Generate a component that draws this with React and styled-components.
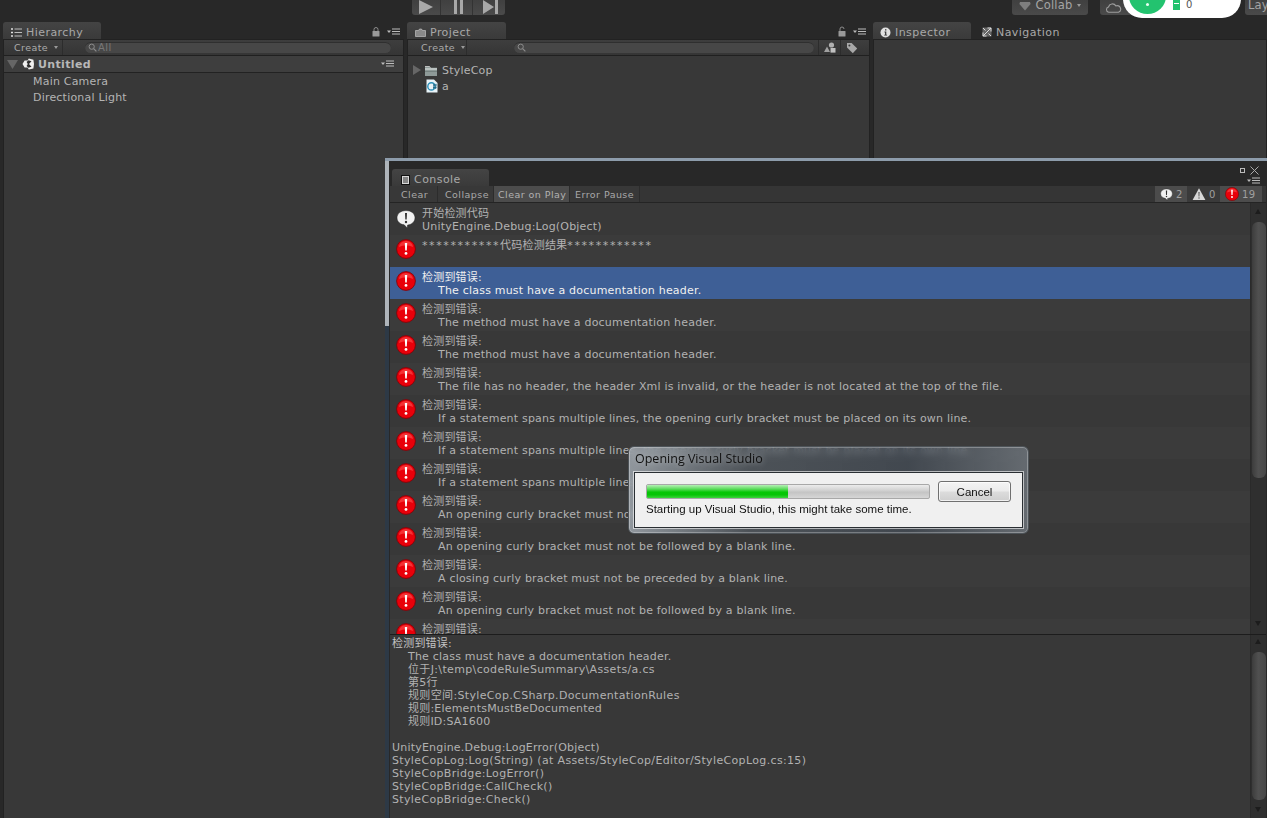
import React from "react";
import styled, { createGlobalStyle } from "styled-components";

const Global = createGlobalStyle`
  html, body { margin: 0; padding: 0; background: #282828; }
  #root { width: 1267px; height: 818px; }
  * { box-sizing: border-box; }
`;

const uiFont = `"DejaVu Sans", "Noto Sans CJK SC", sans-serif`;

const Screen = styled.div`
  position: relative;
  width: 1267px;
  height: 818px;
  overflow: hidden;
  background: #282828;
  font: 11px/13px ${uiFont};
  letter-spacing: 0.2px;
  color: #b4b4b4;
`;

/* ---- top toolbar ---- */
const TopBar = styled.div`
  height: 22px;
  position: relative;
`;
const ToolGroup = styled.div`
  position: absolute;
  top: -6px;
  left: ${p => p.$left}px;
  width: ${p => p.$width}px;
  height: 21px;
  display: flex;
  align-items: center;
  justify-content: ${p => p.$justify || "center"};
  gap: 4px;
  padding: ${p => p.$top ?? 2}px 0 0 ${p => p.$pad || 0}px;
  background: linear-gradient(#3c3c3c, #4a4a4a);
  border-radius: 3px;
  color: #a4a4a4;
  font-size: 11.5px;
  white-space: nowrap;
  overflow: hidden;
`;
const PlaySegment = styled.div`
  flex: 1;
  height: 21px;
  display: flex;
  align-items: center;
  justify-content: center;
  border-right: ${p => (p.$last ? "none" : "1px solid #333")};
`;
const Bubble = styled.div`
  position: absolute;
  left: 1123px;
  top: -20px;
  width: 118px;
  height: 38px;
  border-radius: 0 0 19px 19px;
  background: #fff;
  overflow: hidden;
`;
const BubbleDot = styled.div`
  position: absolute;
  left: 6px;
  top: -2px;
  width: 37px;
  height: 36px;
  border-radius: 50%;
  background: #23c36f;
  &::after {
    content: "";
    position: absolute;
    left: 17px;
    top: 25px;
    width: 3px;
    height: 3px;
    border-radius: 50%;
    background: #e8fff2;
  }
`;
const BubbleBar = styled.div`
  position: absolute;
  left: 50px;
  top: 20px;
  width: 7px;
  height: 10px;
  background: linear-gradient(#23c36f 0 20%, #fff 20% 40%, #23c36f 40%);
  border: 1px solid #23c36f;
`;
const BubbleCount = styled.div`
  position: absolute;
  left: 63px;
  top: 18px;
  font-size: 10px;
  color: #555;
`;

/* ---- docked panels ---- */
const Dock = styled.div`
  display: flex;
  height: 796px;
  padding-left: 3px;
`;
const Panel = styled.section`
  width: ${p => p.$width}px;
  margin-right: ${p => p.$gap}px;
  display: flex;
  flex-direction: column;
  flex: none;
`;
const TabStrip = styled.div`
  height: 17px;
  display: flex;
  align-items: stretch;
  position: relative;
`;
const Tab = styled.div`
  width: ${p => p.$width}px;
  display: flex;
  align-items: center;
  gap: 4px;
  padding: 3px 0 0 ${p => p.$pad}px;
  border-radius: 3px 3px 0 0;
  background: ${p => (p.$active ? "linear-gradient(#444, #3a3a3a)" : "transparent")};
  color: #a8a8a8;
  font-size: 11px;
  letter-spacing: 0.45px;
`;
const TabTools = styled.div`
  position: absolute;
  right: ${p => p.$right || 3}px;
  top: 4px;
  display: flex;
  align-items: center;
  gap: 7px;
`;
const PanelBody = styled.div`
  flex: 1;
  background: #383838;
  border-top: 1px solid #222;
  border-left: 1px solid #222;
  border-right: 1px solid #222;
`;
const PanelToolbar = styled.div`
  height: 16px;
  display: flex;
  align-items: center;
  background: linear-gradient(#3e3e3e, #353535);
  border-bottom: 1px solid #202020;
  font-size: 9.5px;
  letter-spacing: 0.42px;
  color: #ababab;
`;
const CreateBtn = styled.div`
  width: ${p => p.$width}px;
  height: 15px;
  display: flex;
  align-items: center;
  gap: 6px;
  padding-left: ${p => p.$pad}px;
  border-right: 1px solid #2c2c2c;
`;
const Caret = styled.span`
  width: 0;
  height: 0;
  border-left: 2.5px solid transparent;
  border-right: 2.5px solid transparent;
  border-top: 3px solid #999;
`;
const SearchBox = styled.div`
  height: 11px;
  width: ${p => p.$width}px;
  margin-left: ${p => p.$left}px;
  border-radius: 6px;
  background: #474747;
  box-shadow: inset 0 1px 0 #2f2f2f;
  display: flex;
  align-items: center;
  gap: 1px;
  padding-left: 3px;
  font-size: 10px;
  color: #777;
`;
const ToolIconCell = styled.div`
  width: 22px;
  height: 15px;
  margin-left: ${p => p.$left || 0}px;
  display: flex;
  align-items: center;
  justify-content: center;
  border-left: 1px solid #2c2c2c;
`;
const SceneRow = styled.div`
  height: 17px;
  display: flex;
  align-items: center;
  gap: 4px;
  padding: 0 8px 0 3px;
  background: #3e3e3e;
  border-bottom: 1px solid #222;
  font-weight: 700;
  letter-spacing: 0.35px;
  color: #b8b8b8;
`;
const SceneName = styled.span`
  flex: 1;
`;
const TreeList = styled.div`
  display: flex;
  flex-direction: column;
  padding-top: ${p => p.$top || 0}px;
`;
const TreeItem = styled.div`
  height: 16px;
  display: flex;
  align-items: center;
  gap: ${p => p.$gap ?? 4}px;
  padding-left: ${p => p.$indent}px;
  color: #b4b4b4;
`;

/* ---- floating console window ---- */
const ConsoleWindow = styled.section`
  position: absolute;
  left: 385px;
  top: 158px;
  width: 884px;
  height: 662px;
  display: flex;
  flex-direction: column;
  padding: 3px 3px 0 5px;
  background:
    linear-gradient(#8d9cab, #8d9cab) top/100% 3px no-repeat,
    linear-gradient(#aeb4ba 0 168px, #2d3946 168px) left/4px 100% no-repeat,
    #282828;
`;
const ConsoleHead = styled.div`
  height: 25px;
  padding-top: 8px;
  display: flex;
  position: relative;
`;
const ConsoleTab = styled.div`
  width: 97px;
  margin-left: 2px;
  display: flex;
  align-items: center;
  gap: 4px;
  padding: 4px 0 0 9px;
  border-radius: 3px 3px 0 0;
  background: linear-gradient(#444, #3a3a3a);
  color: #a8a8a8;
  font-size: 11px;
  letter-spacing: 0.45px;
`;
const WindowControls = styled.div`
  position: absolute;
  right: 5px;
  top: 5px;
  display: flex;
  flex-direction: column;
  align-items: flex-end;
  gap: 2px;
`;
const WindowButtons = styled.div`
  display: flex;
  align-items: center;
  gap: 5px;
  padding-right: 2px;
`;
const ConsoleToolbar = styled.div`
  height: 17px;
  display: flex;
  align-items: stretch;
  background: #353535;
  border-bottom: 1px solid #242424;
  font-size: 9.5px;
  letter-spacing: 0.45px;
  color: #a9a9a9;
`;
const ToggleBtn = styled.div`
  display: flex;
  align-items: center;
  flex: none;
  white-space: nowrap;
  width: ${p => p.$width}px;
  padding-left: ${p => p.$pad}px;
  background: ${p => (p.$on ? "#4c4c4c" : "#383838")};
  border-right: 1px solid #2c2c2c;
  color: ${p => (p.$on ? "#b2b2b2" : "#a9a9a9")};
`;
const ToolbarSpacer = styled.div`
  flex: 1;
`;
const ToolbarEnd = styled.div`
  flex: none;
  width: 4px;
`;
const CountBtn = styled.div`
  width: ${p => p.$width}px;
  flex: none;
  display: flex;
  align-items: center;
  gap: 3px;
  padding-left: 5px;
  background: ${p => (p.$on ? "#4c4c4c" : "#3a3a3a")};
  color: #a0a0a0;
  font-size: 10px;
`;
const ConsoleMain = styled.div`
  height: 431px;
  display: flex;
`;
const LogList = styled.div`
  width: 860px;
  overflow: hidden;
  background: #383838;
`;
const LogRow = styled.div`
  height: 32px;
  display: grid;
  grid-template-columns: 32px 1fr;
  background: ${p => (p.$selected ? "#3e5f96" : p.$odd ? "#3b3b3b" : "#383838")};
  color: ${p => (p.$selected ? "#f0f0f0" : "#b2b2b2")};
`;
const LogIcon = styled.div`
  display: flex;
  align-items: center;
  justify-content: center;
  padding-bottom: ${p => (p.$info ? 1 : 4)}px;
  padding-right: 1px;
`;
const LogText = styled.div`
  padding-top: 4px;
`;
const LogLine = styled.div`
  height: 13px;
  white-space: nowrap;
  padding-left: ${p => (p.$indent ? 16 : 0)}px;
`;
const Stars = styled.span`
  letter-spacing: 1.6px;
`;
const Track = styled.div`
  width: 16px;
  flex: none;
  position: relative;
  background: #2f2f2f;
  border-left: 1px solid #2a2a2a;
`;
const Thumb = styled.div`
  position: absolute;
  left: 1px;
  right: 0;
  top: ${p => p.$top}px;
  height: ${p => p.$height}px;
  border-radius: 6px;
  background: linear-gradient(90deg, #3c3c3c, #505050 45%, #474747);
`;
const Arrow = styled.span`
  position: absolute;
  left: 4px;
  top: ${p => p.$top}px;
  width: 0;
  height: 0;
  border-left: 3.5px solid transparent;
  border-right: 3.5px solid transparent;
  ${p => (p.$up ? "border-bottom: 5px solid #1c1c1c;" : "border-top: 5px solid #1c1c1c;")}
`;
const DetailPane = styled.div`
  flex: 1;
  display: flex;
  border-top: 1px solid #1c1c1c;
  background: #383838;
`;
const DetailText = styled.div`
  width: 860px;
  padding: 2px 0 0 2px;
  overflow: hidden;
  color: #b2b2b2;
`;
const DetailLine = styled.div`
  height: 13px;
  white-space: nowrap;
  padding-left: ${p => (p.$indent ? 16 : 0)}px;
  letter-spacing: ${p => (p.$wide ? 0.35 : 0.2)}px;
  color: ${p => (p.$bright ? "#c4c4c4" : "inherit")};
`;

/* ---- native progress dialog ---- */
const DialogFrame = styled.div`
  position: absolute;
  left: 628px;
  top: 446px;
  width: 401px;
  height: 88px;
  padding: 25px 5px 5px;
  border-radius: 6px;
  border: 1px solid #4d5358;
  backdrop-filter: blur(3px);
  background: linear-gradient(90deg, rgba(170, 178, 186, 0.78), rgba(95, 105, 115, 0.55) 30%, rgba(72, 82, 94, 0.62) 70%, rgba(120, 128, 136, 0.7));
  box-shadow: inset 0 0 0 1px rgba(255, 255, 255, 0.28);
`;
const DialogTitle = styled.div`
  position: absolute;
  left: 6px;
  top: 4px;
  font: 12.5px/16px "Open Sans", "Liberation Sans", sans-serif;
  letter-spacing: 0;
  color: #111;
  text-shadow: 0 0 6px rgba(255, 255, 255, 0.55);
`;
const DialogBody = styled.div`
  height: 56px;
  padding: 8px 11px 0 11px;
  background: #f0f0f0;
  border: 1px solid #2a2f33;
  box-shadow: 0 0 0 1px rgba(255, 255, 255, 0.6);
  display: grid;
  grid-template-columns: 284px 73px;
  column-gap: 8px;
  align-content: start;
  font: 11.5px/14px "Liberation Sans", sans-serif;
  letter-spacing: 0;
  color: #111;
`;
const ProgressTrack = styled.div`
  height: 15px;
  margin-top: 3px;
  border: 1px solid #a8a8a8;
  border-radius: 2px;
  background: linear-gradient(#ececec, #cfcfcf 45%, #c4c4c4 55%, #d6d6d6);
  overflow: hidden;
`;
const ProgressFill = styled.div`
  height: 100%;
  background: linear-gradient(#b6f0b6, #5fdc5f 30%, #06c706 55%, #07c407 75%, #3cd43c);
`;
const CancelButton = styled.div`
  height: 21px;
  display: flex;
  align-items: center;
  justify-content: center;
  border: 1px solid #707070;
  border-radius: 3px;
  background: linear-gradient(#f4f4f4, #ebebeb 48%, #dcdcdc 52%, #cfcfcf);
  box-shadow: inset 0 0 0 1px rgba(255, 255, 255, 0.7);
  font-size: 11.5px;
`;
const DialogMessage = styled.div`
  grid-column: 1 / 3;
  margin-top: 0;
`;

/* ---- icons ---- */
const Svg = ({ w, h, children, vb }) => (
  <svg width={w} height={h} viewBox={vb || `0 0 ${w} ${h}`} style={{ flex: "none", display: "block" }}>
    {children}
  </svg>
);

const ErrorIcon = ({ size = 20 }) => (
  <Svg w={size} h={size} vb="0 0 20 20">
    <circle cx="10" cy="10" r="9.4" fill="#e8000a" stroke="#7c0006" strokeWidth="0.8" />
    <path d="M3 8a7 6 0 0 1 14 0 a12 8 0 0 0-14 0z" fill="#ff5a5a" opacity="0.55" />
    <path d="M8.8 4h2.4l-.4 7.6H9.2z" fill="#fff" />
    <circle cx="10" cy="14.4" r="1.4" fill="#fff" />
  </Svg>
);
const InfoIcon = ({ size = 20 }) => (
  <Svg w={size} h={size} vb="0 0 20 20">
    <path d="M10 1.6c5 0 9 2.9 9 7.2s-4 7.2-7.4 7.2l-.4 3-3-3.2C4.2 15.4 1 12.7 1 8.8 1 4.5 5 1.6 10 1.6z" fill="#f2f2f2" stroke="#222" strokeWidth="0.5" />
    <path d="M9 4h2l-.3 6.6H9.3z" fill="#333" />
    <circle cx="10" cy="13" r="1.2" fill="#333" />
  </Svg>
);
const WarnIcon = () => (
  <Svg w={14} h={14}>
    <path d="M7 1.2 13.4 13H.6z" fill="#d8d8d8" />
    <path d="M6.4 5h1.2l-.2 4.4h-.8z" fill="#555" />
    <circle cx="7" cy="11" r=".7" fill="#555" />
  </Svg>
);
const MenuIcon = () => (
  <Svg w={14} h={8}>
    <path d="M0 2.5h4L2 5z" fill="#bbb" />
    <path d="M5 1h8M5 3.5h8M5 6h8" stroke="#bbb" strokeWidth="1.2" />
  </Svg>
);
const LockIcon = ({ open }) => (
  <Svg w={8} h={11}>
    <path d={open ? "M2 5V3a2 2 0 0 1 4 0" : "M2 5V3.5a2 2 0 0 1 4 0V5"} stroke="#8c8c8c" fill="none" strokeWidth="1" />
    <rect x="0.5" y="5" width="7" height="5.5" rx="0.6" fill="#9a9a9a" />
  </Svg>
);
const HierarchyIcon = () => (
  <Svg w={11} h={9}>
    <path d="M0 1h2M0 4.5h2M0 8h2" stroke="#e0e0e0" strokeWidth="1.3" />
    <path d="M3.5 1H11M3.5 4.5H11M3.5 8H11" stroke="#bdbdbd" strokeWidth="1" />
  </Svg>
);
const ProjectTabIcon = () => (
  <Svg w={11} h={9}>
    <path d="M.5 2.5h3l1-1.5h2l1 1.5h3v6H.5z" fill="#8a8a8a" stroke="#d0d0d0" strokeWidth=".6" />
  </Svg>
);
const SearchIcon = () => (
  <Svg w={9} h={9}>
    <circle cx="3.7" cy="3.7" r="2.6" stroke="#8c8c8c" fill="none" />
    <path d="M5.6 5.6 8.4 8.4" stroke="#8c8c8c" strokeWidth="1.2" />
  </Svg>
);
const ShapesIcon = () => (
  <Svg w={12} h={11}>
    <circle cx="7.5" cy="3" r="2.6" fill="#b0b0b0" />
    <path d="M0 10 3 4.6 6 10z" fill="#a0a0a0" />
    <rect x="6.5" y="6" width="5" height="4.6" fill="#c0c0c0" />
  </Svg>
);
const TagIcon = () => (
  <Svg w={12} h={12}>
    <path d="M1 1h4.6l5.6 5.6-4.4 4.6L1 5.6z" fill="#a8a8a8" />
    <circle cx="3.4" cy="3.4" r="1" fill="#3a3a3a" />
  </Svg>
);
const TriRight = () => (
  <Svg w={8} h={10}>
    <path d="M0 0 8 5 0 10z" fill="#666" />
  </Svg>
);
const TriDown = () => (
  <Svg w={11} h={10}>
    <path d="M0 1h11L5.5 10z" fill="#666" />
  </Svg>
);
const UnityLogo = () => (
  <Svg w={12} h={12}>
    <path d="M6.8.4 11.4 1.7 12 6l-.6 4.4-4.6 1.2L5.6 9.4l-3 .1L.5 6l2.1-3.5 3 .1z" fill="#f0f0f0" />
    <path d="M6.5 2.2 9.5 3.2 7 6l2.5 2.8-3 1L4.6 8 5.8 6 4.6 4z" fill="#2e2e2e" />
  </Svg>
);
const FolderIcon = () => (
  <Svg w={15} h={13}>
    <path d="M1 2.5h4.5l1 1.2H13V12H1z" fill="#8e9a98" />
    <path d="M1 5h12" stroke="#d8dedc" strokeWidth="1.2" />
    <path d="M1 7.5h12" stroke="#6f7b79" strokeWidth="0.8" />
    <path d="M1 2.5h4.5l1 1.2" stroke="#d5d5d5" strokeWidth=".8" fill="none" />
  </Svg>
);
const CSharpIcon = () => (
  <Svg w={12} h={14}>
    <path d="M.5.5h7.5L11.5 4v9.5H.5z" fill="#e8f3f8" />
    <circle cx="5.4" cy="7.4" r="3.6" stroke="#2a8fb8" strokeWidth="1.4" fill="none" />
    <path d="M7 6h3.6M7 8.6h3.6M8 4.8 7.6 10M10 4.8 9.6 10" stroke="#17607e" strokeWidth=".8" />
  </Svg>
);
const InspectorIcon = () => (
  <Svg w={11} h={11}>
    <circle cx="5.5" cy="5.5" r="5" fill="#e0e0e0" />
    <path d="M4.5 4.6h1.8v3.2h.8v.8H4.2v-.8h.9V5.4h-.6zM5 2.2h1.4v1.4H5z" fill="#333" />
  </Svg>
);
const NavIcon = () => (
  <Svg w={10} h={10}>
    <rect x=".5" y=".5" width="9" height="9" fill="#666" />
    <path d="M1 9 9 1M5.5 1H9v3.5M1 5.5V9h3.5M1 1l2.5 2.5M9 9 6.5 6.5" stroke="#ddd" strokeWidth="1" fill="none" />
  </Svg>
);
const ConsoleIcon = () => (
  <Svg w={9} h={10}>
    <rect x=".5" y=".5" width="8" height="9" fill="#d8d8d8" stroke="#111" />
    <path d="M2 3h5M2 5h5M2 7h5" stroke="#333" />
  </Svg>
);
const CloudIcon = () => (
  <Svg w={17} h={10} vb="0 0 15 9">
    <path d="M3.2 8.3A2.4 2.4 0 0 1 3 3.6 3.6 3.6 0 0 1 9.6 2.6 2.9 2.9 0 0 1 12 8.3z" stroke="#9c9c9c" fill="none" />
  </Svg>
);
const DiamondIcon = () => (
  <Svg w={12} h={10}>
    <path d="M1 1h10l.6 2L6 9.6.4 3z" fill="#7e7e7e" />
  </Svg>
);

const msg = "\u68c0\u6d4b\u5230\u9519\u8bef:";
const openMsg = "An opening curly bracket must not be followed by a blank line.";
const spanMsg = "If a statement spans multiple lines, the opening curly bracket must be placed on its own line.";
const methodMsg = "The method must have a documentation header.";

const logs = [
  { kind: "info", a: "\u5f00\u59cb\u68c0\u6d4b\u4ee3\u7801", b: "UnityEngine.Debug:Log(Object)" },
  { a: <><Stars>***********</Stars>{"\u4ee3\u7801\u68c0\u6d4b\u7ed3\u679c"}<Stars>************</Stars></> },
  { a: msg, b: "The class must have a documentation header.", indent: true, selected: true },
  { a: msg, b: methodMsg, indent: true },
  { a: msg, b: methodMsg, indent: true },
  { a: msg, b: "The file has no header, the header Xml is invalid, or the header is not located at the top of the file.", indent: true },
  { a: msg, b: spanMsg, indent: true },
  { a: msg, b: spanMsg, indent: true },
  { a: msg, b: spanMsg, indent: true },
  { a: msg, b: openMsg, indent: true },
  { a: msg, b: openMsg, indent: true },
  { a: msg, b: "A closing curly bracket must not be preceded by a blank line.", indent: true },
  { a: msg, b: openMsg, indent: true },
  { a: msg, indent: true },
];

const details = [
  { t: msg, bright: true },
  { t: "The class must have a documentation header.", indent: true },
  { t: "\u4f4d\u4e8eJ:\\temp\\codeRuleSummary\\Assets/a.cs", indent: true, wide: true },
  { t: "\u7b2c5\u884c", indent: true },
  { t: "\u89c4\u5219\u7a7a\u95f4:StyleCop.CSharp.DocumentationRules", indent: true, wide: true },
  { t: "\u89c4\u5219:ElementsMustBeDocumented", indent: true },
  { t: "\u89c4\u5219ID:SA1600", indent: true },
  { t: "\u00a0" },
  { t: "UnityEngine.Debug:LogError(Object)" },
  { t: "StyleCopLog:Log(String) (at Assets/StyleCop/Editor/StyleCopLog.cs:15)", wide: true },
  { t: "StyleCopBridge:LogError()", wide: true },
  { t: "StyleCopBridge:CallCheck()", wide: true },
  { t: "StyleCopBridge:Check()", wide: true },
];

export default function App() {
  return (
    <Screen>
      <Global />
      <TopBar>
        <ToolGroup $left={412} $width={93} $top={5}>
          <PlaySegment>
            <Svg w={15} h={14}><path d="M1 0 15 7 1 14z" fill="#a8a8a8" /></Svg>
          </PlaySegment>
          <PlaySegment>
            <Svg w={11} h={14}><path d="M1 0h3v14H1zM7 0h3v14H7z" fill="#a8a8a8" /></Svg>
          </PlaySegment>
          <PlaySegment $last>
            <Svg w={16} h={14}><path d="M0 0 11 7 0 14zM12 0h3v14h-3z" fill="#a8a8a8" /></Svg>
          </PlaySegment>
        </ToolGroup>
        <ToolGroup $left={1012} $width={76}>
          <DiamondIcon />
          <span>Collab</span>
          <Caret />
        </ToolGroup>
        <ToolGroup $left={1100} $width={32} $justify="flex-start" $pad={5} $top={6}>
          <CloudIcon />
        </ToolGroup>
        <ToolGroup $left={1245} $width={40} $justify="flex-start" $pad={3}>
          <span>Layout</span>
        </ToolGroup>
        <Bubble>
          <BubbleDot />
          <BubbleBar />
          <BubbleCount>0</BubbleCount>
        </Bubble>
      </TopBar>

      <Dock>
        <Panel $width={401} $gap={3}>
          <TabStrip>
            <Tab $active $width={98} $pad={8}>
              <HierarchyIcon />
              <span>Hierarchy</span>
            </Tab>
            <TabTools>
              <LockIcon />
              <MenuIcon />
            </TabTools>
          </TabStrip>
          <PanelBody>
            <PanelToolbar>
              <CreateBtn $width={59} $pad={10}>
                <span>Create</span>
                <Caret />
              </CreateBtn>
              <SearchBox $width={306} $left={22}>
                <SearchIcon />
                <span>All</span>
              </SearchBox>
            </PanelToolbar>
            <SceneRow>
              <TriDown />
              <UnityLogo />
              <SceneName>Untitled</SceneName>
              <MenuIcon />
            </SceneRow>
            <TreeList>
              <TreeItem $indent={29}>Main Camera</TreeItem>
              <TreeItem $indent={29}>Directional Light</TreeItem>
            </TreeList>
          </PanelBody>
        </Panel>

        <Panel $width={463} $gap={3}>
          <TabStrip>
            <Tab $active $width={99} $pad={8}>
              <ProjectTabIcon />
              <span>Project</span>
            </Tab>
            <TabTools>
              <LockIcon open />
              <MenuIcon />
            </TabTools>
          </TabStrip>
          <PanelBody>
            <PanelToolbar>
              <CreateBtn $width={59} $pad={13}>
                <span>Create</span>
                <Caret />
              </CreateBtn>
              <SearchBox $width={300} $left={47}>
                <SearchIcon />
              </SearchBox>
              <ToolIconCell $left={4}>
                <ShapesIcon />
              </ToolIconCell>
              <ToolIconCell>
                <TagIcon />
              </ToolIconCell>
            </PanelToolbar>
            <TreeList $top={6}>
              <TreeItem $indent={5} $gap={3}>
                <TriRight />
                <FolderIcon />
                <span>StyleCop</span>
              </TreeItem>
              <TreeItem $indent={18}>
                <CSharpIcon />
                <span>a</span>
              </TreeItem>
            </TreeList>
          </PanelBody>
        </Panel>

        <Panel $width={394} $gap={0}>
          <TabStrip>
            <Tab $active $width={98} $pad={7}>
              <InspectorIcon />
              <span>Inspector</span>
            </Tab>
            <Tab $width={100} $pad={11}>
              <NavIcon />
              <span>Navigation</span>
            </Tab>
          </TabStrip>
          <PanelBody />
        </Panel>
      </Dock>

      <ConsoleWindow>
        <ConsoleHead>
          <ConsoleTab>
            <ConsoleIcon />
            <span>Console</span>
          </ConsoleTab>
          <WindowControls>
            <WindowButtons>
              <Svg w={5} h={5}><rect x=".5" y=".5" width="4" height="4" fill="none" stroke="#bbb" /></Svg>
              <Svg w={9} h={9}><path d="M.5.5l8 8M8.5.5l-8 8" stroke="#aaa" /></Svg>
            </WindowButtons>
            <MenuIcon />
          </WindowControls>
        </ConsoleHead>
        <ConsoleToolbar>
          <ToggleBtn $width={48} $pad={11}>Clear</ToggleBtn>
          <ToggleBtn $width={56} $pad={7}>Collapse</ToggleBtn>
          <ToggleBtn $on $width={76} $pad={4}>Clear on Play</ToggleBtn>
          <ToggleBtn $width={70} $pad={5}>Error Pause</ToggleBtn>
          <ToolbarSpacer />
          <CountBtn $on $width={32}><InfoIcon size={13} /><span>2</span></CountBtn>
          <CountBtn $width={33}><WarnIcon /><span>0</span></CountBtn>
          <CountBtn $on $width={42}><ErrorIcon size={14} /><span>19</span></CountBtn>
          <ToolbarEnd />
        </ConsoleToolbar>
        <ConsoleMain>
          <LogList>
            {logs.map((l, i) => (
              <LogRow key={i} $odd={i % 2 === 1} $selected={l.selected}>
                <LogIcon $info={l.kind === "info"}>{l.kind === "info" ? <InfoIcon /> : <ErrorIcon />}</LogIcon>
                <LogText>
                  <LogLine>{l.a}</LogLine>
                  {l.b && <LogLine $indent={l.indent}>{l.b}</LogLine>}
                </LogText>
              </LogRow>
            ))}
          </LogList>
          <Track>
            <Arrow $up $top={6} />
            <Thumb $top={19} $height={256} />
            <Arrow $top={418} />
          </Track>
        </ConsoleMain>
        <DetailPane>
          <DetailText>
            {details.map((d, i) => (
              <DetailLine key={i} $indent={d.indent} $bright={d.bright} $wide={d.wide}>
                {d.t}
              </DetailLine>
            ))}
          </DetailText>
          <Track>
            <Arrow $up $top={4} />
            <Thumb $top={17} $height={148} />
            <Arrow $top={172} />
          </Track>
        </DetailPane>
      </ConsoleWindow>

      <DialogFrame>
        <DialogTitle>Opening Visual Studio</DialogTitle>
        <DialogBody>
          <ProgressTrack>
            <ProgressFill style={{ width: "50%" }} />
          </ProgressTrack>
          <CancelButton>Cancel</CancelButton>
          <DialogMessage>Starting up Visual Studio, this might take some time.</DialogMessage>
        </DialogBody>
      </DialogFrame>
    </Screen>
  );
}
